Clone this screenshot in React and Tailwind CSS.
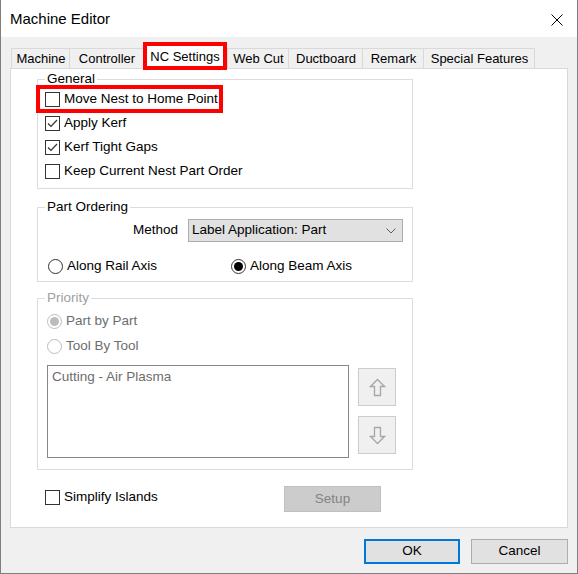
import React from 'react'

const TABS = [
  { label: 'Machine', w: 'w-[58px]' },
  { label: 'Controller', w: 'w-[74px]' },
  { label: 'NC Settings', selected: true },
  { label: 'Web Cut', w: 'w-[61px]' },
  { label: 'Ductboard', w: 'w-[74px]' },
  { label: 'Remark', w: 'w-[61px]' },
  { label: 'Special Features', w: 'w-[112px]', last: true },
]

function CheckBox({ checked }) {
  return (
    <span className="w-[15px] h-[15px] border border-[#333] bg-white flex items-center justify-center shrink-0">
      {checked && (
        <svg width="13" height="13" viewBox="0 0 13 13" fill="none">
          <path d="M2 6.5 L5 9.5 L11 3" stroke="#333" strokeWidth="1.2" />
        </svg>
      )}
    </span>
  )
}

function Radio({ checked, disabled }) {
  const ring = disabled ? 'border-[#bcbcbc]' : 'border-[#333]'
  const dot = disabled ? 'bg-[#bcbcbc]' : 'bg-black'
  return (
    <span className={`w-[15px] h-[15px] rounded-full border ${ring} bg-white flex items-center justify-center shrink-0`}>
      {checked && <span className={`w-[9px] h-[9px] rounded-full ${dot}`} />}
    </span>
  )
}

function CheckRow({ label, checked, marked }) {
  return (
    <div className="relative h-[24px] flex items-center gap-[4px] pl-[7px]">
      {/* red annotation box */}
      {marked && <div className="absolute left-[-2px] top-[-2px] w-[187px] h-[28px] border-[4px] border-[#ff0000]" />}
      <CheckBox checked={checked} />
      <span>{label}</span>
    </div>
  )
}

function Arrow({ down }) {
  return (
    <svg width="17" height="19" viewBox="0 0 17 19" fill="none" className={down ? 'rotate-180' : ''}>
      <path d="M8.5 1.5 L15.5 8.5 L11.5 8.5 L11.5 17.5 L5.5 17.5 L5.5 8.5 L1.5 8.5 Z" stroke="#a6a6a6" strokeWidth="1.3" strokeLinejoin="miter" />
    </svg>
  )
}

export default function App() {
  return (
    <div className="w-[578px] h-[574px] border-l border-r border-b border-[#7f7f7f] bg-[#f0f0f0] flex flex-col font-['Liberation_Sans',Arial,sans-serif] text-[13.5px] text-black overflow-hidden">
      {/* Title bar */}
      <div className="h-[37px] bg-white flex items-center justify-between pl-[9px] pr-[14px] pt-[2px] shrink-0">
        <span className="text-[15px]">Machine Editor</span>
        <svg width="12" height="12" viewBox="0 0 12 12">
          <path d="M0.5 0.5 L11.5 11.5 M11.5 0.5 L0.5 11.5" stroke="#000" strokeWidth="1" />
        </svg>
      </div>

      <div className="flex flex-col px-[9px]">
        {/* Tabs */}
        <div className="flex items-end mt-[5px] pl-[1px] h-[26px]">
          {TABS.map(t =>
            t.selected ? (
              <div
                key={t.label}
                className="relative z-10 -mb-[2px] w-[84px] h-[28px] border-[4px] border-[#ff0000] bg-white flex items-center justify-center pt-[1px] text-[13px]"
              >
                {t.label}
              </div>
            ) : (
              <div
                key={t.label}
                className={`${t.w} h-[20px] border-t border-l ${t.last ? 'border-r' : ''} border-[#d9d9d9] bg-[#f0f0f0] flex items-center justify-center pt-[1px] pl-[1px] text-[13px]`}
              >
                {t.label}
              </div>
            )
          )}
        </div>

        {/* Panel */}
        <div className="h-[460px] border border-[#d9d9d9] bg-white pl-[26px] pt-[2px] flex flex-col">
          {/* General */}
          <fieldset className="w-[376px] border border-[#dcdcdc] pb-[5px]">
            <legend className="ml-[7px] px-[2px] leading-[16px]">General</legend>
            <CheckRow label="Move Nest to Home Point" marked />
            <CheckRow label="Apply Kerf" checked />
            <CheckRow label="Kerf Tight Gaps" checked />
            <CheckRow label="Keep Current Nest Part Order" />
          </fieldset>

          {/* Part Ordering */}
          <fieldset className="mt-[10px] w-[376px] border border-[#dcdcdc] pb-[3px]">
            <legend className="ml-[7px] px-[2px] leading-[16px]">Part Ordering</legend>
            <div className="flex items-center mt-[4px]">
              <span className="w-[140px] text-right">Method</span>
              <div className="ml-[10px] w-[215px] h-[23px] bg-[#e1e1e1] border border-[#adadad] flex items-center justify-between pl-[3px] pr-[6px]">
                <span>Label Application: Part</span>
                <svg width="10" height="6" viewBox="0 0 10 6" fill="none">
                  <path d="M0.5 0.5 L5 5 L9.5 0.5" stroke="#606060" strokeWidth="1" />
                </svg>
              </div>
            </div>
            <div className="flex items-center h-[24px] mt-[12px] pl-[10px]">
              <div className="w-[183px] flex items-center gap-[4px]">
                <Radio />
                <span>Along Rail Axis</span>
              </div>
              <div className="flex items-center gap-[4px]">
                <Radio checked />
                <span>Along Beam Axis</span>
              </div>
            </div>
          </fieldset>

          {/* Priority */}
          <fieldset className="mt-[8px] w-[376px] border border-[#dcdcdc] pb-[11px]">
            <legend className="ml-[7px] px-[2px] leading-[16px] text-[#a0a0a0]">Priority</legend>
            <div className="h-[24px] mt-[3px] pl-[9px] flex items-center gap-[4px] text-[#6d6d6d]">
              <Radio checked disabled />
              <span>Part by Part</span>
            </div>
            <div className="h-[24px] mt-[1px] pl-[9px] flex items-center gap-[4px] text-[#6d6d6d]">
              <Radio disabled />
              <span>Tool By Tool</span>
            </div>
            <div className="flex items-start mt-[7px] pl-[9px]">
              <div className="w-[302px] h-[93px] border border-[#828790] bg-white px-[4px] pt-[1px] text-[#6d6d6d]">
                Cutting - Air Plasma
              </div>
              <div className="ml-[9px] flex flex-col">
                <div className="mt-[3px] w-[38px] h-[38px] border border-[#cccccc] bg-[#f0f0f0] flex items-center justify-center">
                  <Arrow />
                </div>
                <div className="mt-[10px] w-[38px] h-[38px] border border-[#cccccc] bg-[#f0f0f0] flex items-center justify-center">
                  <Arrow down />
                </div>
              </div>
            </div>
          </fieldset>

          {/* Bottom row */}
          <div className="flex items-start mt-[16px] ml-[8px]">
            <div className="w-[239px] h-[22px] flex items-center gap-[4px]">
              <CheckBox />
              <span>Simplify Islands</span>
            </div>
            <div className="w-[97px] h-[26px] bg-[#cccccc] border border-[#bfbfbf] flex items-center justify-center text-[#838383]">
              Setup
            </div>
          </div>
        </div>

        {/* Dialog buttons */}
        <div className="flex justify-end gap-[11px] mt-[11px]">
          <div className="w-[96px] h-[25px] bg-[#e1e1e1] border-2 border-[#0078d7] flex items-center justify-center">
            OK
          </div>
          <div className="w-[97px] h-[25px] bg-[#e1e1e1] border border-[#adadad] flex items-center justify-center">
            Cancel
          </div>
        </div>
      </div>
    </div>
  )
}
